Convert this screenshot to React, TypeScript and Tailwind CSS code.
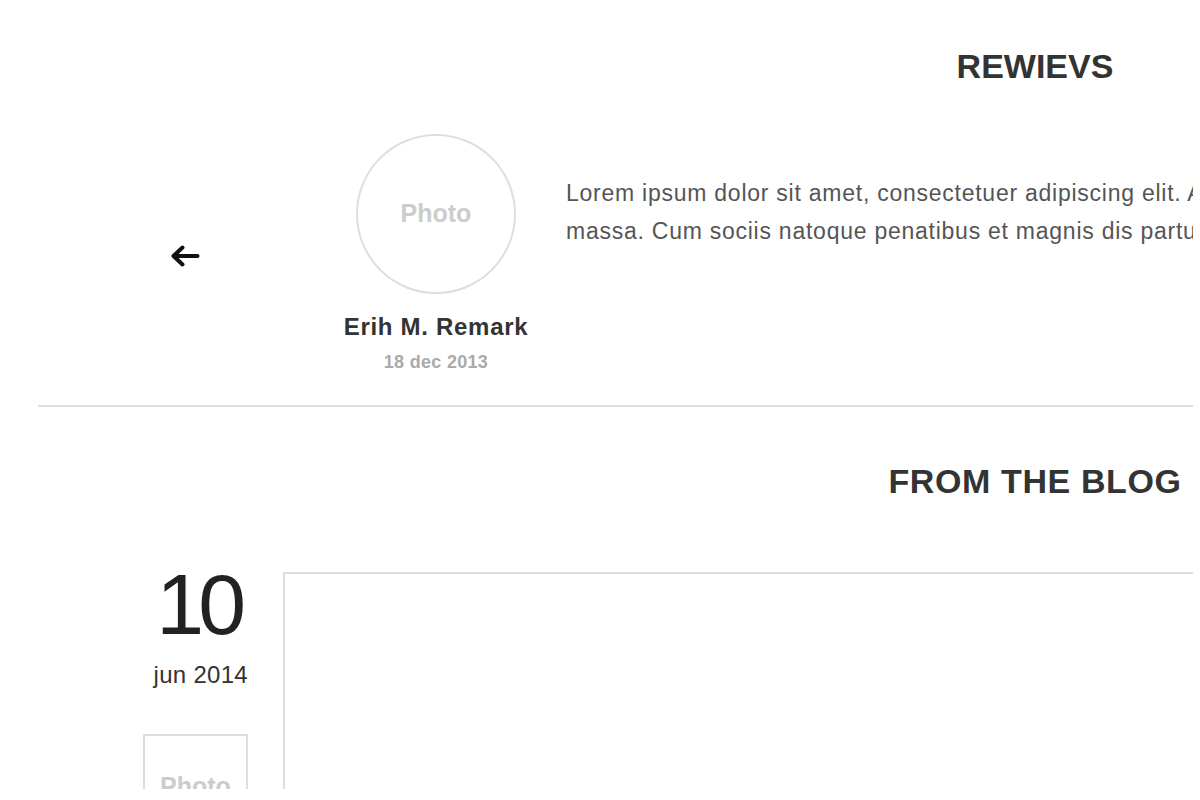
const ArrowLeft = () => (
  <svg width="30" height="24" viewBox="0 0 30 24" fill="none" stroke="#111" strokeWidth="4" strokeLinecap="round" strokeLinejoin="round">
    <path d="M27.5 12H4" />
    <path d="M12.5 3.5L3.5 12L12.5 20.5" />
  </svg>
);

const Review = () => (
  <div className="mt-[48px] flex items-start">
    <div className="ml-[132px] mt-[110px] w-[30px]">
      <ArrowLeft />
    </div>
    <div className="ml-[136px] flex w-[200px] flex-col items-center">
      <div className="flex h-[160px] w-[160px] items-center justify-center rounded-full border-2 border-[#dedede]">
        <span className="text-[25px] font-bold text-[#cccccc]">Photo</span>
      </div>
      <p className="mt-[19px] text-[24px] leading-[28px] font-bold tracking-[0.7px] text-[#333333]">Erih M. Remark</p>
      <p className="mt-[10px] text-[18px] leading-[22px] font-bold tracking-[0.3px] text-[#aaaaaa]">18 dec 2013</p>
    </div>
    <div className="ml-[30px] mt-[40px] text-[23px] leading-[38px] tracking-[0.75px] whitespace-nowrap text-[#555555]">
      <p>Lorem ipsum dolor sit amet, consectetuer adipiscing elit. Aenean commodo ligula eget dolor. Aenean</p>
      <p>massa. Cum sociis natoque penatibus et magnis dis parturient montes, nascetur ridiculus mus.</p>
    </div>
  </div>
);

const BlogPost = () => (
  <div className="mt-[60px] flex items-start">
    <div className="ml-[105px] flex w-[105px] flex-col items-end text-right">
      <span className="pr-[8px] text-[86px] leading-[86px] tracking-[-6px] text-[#222222]">10</span>
      <span className="mt-[14px] text-[24px] leading-[28px] tracking-[0.3px] text-[#333333]">jun 2014</span>
      <div className="mt-[45px] flex h-[105px] w-[105px] items-center justify-center border-2 border-[#dedede]">
        <span className="text-[25px] font-bold text-[#cccccc]">Photo</span>
      </div>
    </div>
    <div className="ml-[35px] mt-[11px] h-[400px] flex-1 border-l-2 border-t-2 border-[#dedede]" />
  </div>
);

export default function App() {
  return (
    <div className="h-[800px] w-[1200px] bg-white">
      <div className="h-[789px] w-[1193px] overflow-hidden font-['Liberation_Sans',Arial,sans-serif]">
        <div className="ml-[38px] w-[1994px]">
          <h2 className="pt-[46px] text-center text-[34px] leading-[40px] font-bold text-[#333333]">REWIEVS</h2>
          <Review />
          <div className="mt-[32px] border-t-2 border-[#dedede]" />
          <h2 className="mt-[54px] text-center text-[34px] leading-[40px] font-bold tracking-[0.6px] text-[#333333]">FROM THE BLOG</h2>
          <BlogPost />
        </div>
      </div>
    </div>
  );
}
